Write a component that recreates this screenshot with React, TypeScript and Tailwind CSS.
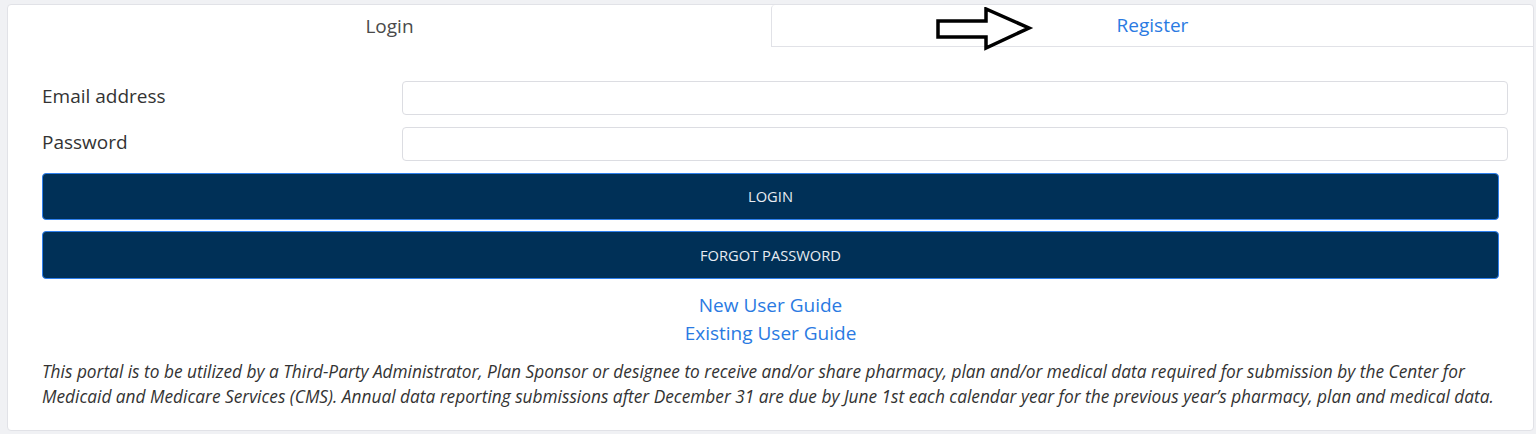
import React from "react";

export default function App() {
  return (
    <div className="w-[1536px] h-[434px] bg-[#f0f1f4] pt-[4px] pl-[7px] overflow-hidden" style={{ fontFamily: '"Open Sans", "Liberation Sans", sans-serif' }}>
      <div className="w-[1527px] h-[427px] bg-white border border-[#e1e2e7] rounded-[4px] relative">
        <div className="flex h-[42px]">
          <div className="w-[763px] flex items-center justify-center text-[19px] text-[#4a4a4a]">Login</div>
          <div className="flex-1 flex items-center justify-center text-[19px] text-[#2a7ae2] border-l border-b border-[#e1e2e7] rounded-tl-[4px]">Register</div>
        </div>
        <svg className="absolute left-[928px] top-[2px]" width="100" height="44" viewBox="0 0 100 44">
          <path d="M2 14 H50 V2 L93 21 L50 41 V30 H2 Z" fill="white" stroke="black" strokeWidth="3.5" strokeLinejoin="miter" />
        </svg>
        <div className="pl-[34px] pr-[25px] pt-[34px]">
          <div className="flex items-center h-[34px]">
            <label className="w-[360px] text-[19px] leading-[26px] pb-[4px] text-[#333]">Email address</label>
            <input className="flex-1 h-[34px] border border-[#dcdde2] rounded-[4px] outline-none" />
          </div>
          <div className="flex items-center h-[34px] mt-[12px]">
            <label className="w-[360px] text-[19px] leading-[26px] pb-[4px] text-[#333]">Password</label>
            <input type="password" className="flex-1 h-[34px] border border-[#dcdde2] rounded-[4px] outline-none" />
          </div>
          <div className="mr-[9px]">
            <button className="mt-[12px] w-full h-[47px] bg-[#003057] border border-[#2f80ed] rounded-[4px] text-[14.7px] text-[#e8ecf2]">LOGIN</button>
            <button className="mt-[11px] w-full h-[48px] bg-[#003057] border border-[#2f80ed] rounded-[4px] text-[14.7px] text-[#e8ecf2]">FORGOT PASSWORD</button>
            <div className="mt-[12px] flex flex-col items-center text-[19px] leading-[28px] text-[#2a7ae2]">
              <a>New User Guide</a>
              <a>Existing User Guide</a>
            </div>
          </div>
          <p className="mt-[12px] text-[17.3px] leading-[25px] italic text-[#333]">
            This portal is to be utilized by a Third-Party Administrator, Plan Sponsor or designee to receive and/or share pharmacy, plan and/or medical data required for submission by the Center for Medicaid and Medicare Services (CMS). Annual data reporting submissions after December 31 are due by June 1st each calendar year for the previous year’s pharmacy, plan and medical data.
          </p>
        </div>
      </div>
    </div>
  );
}
